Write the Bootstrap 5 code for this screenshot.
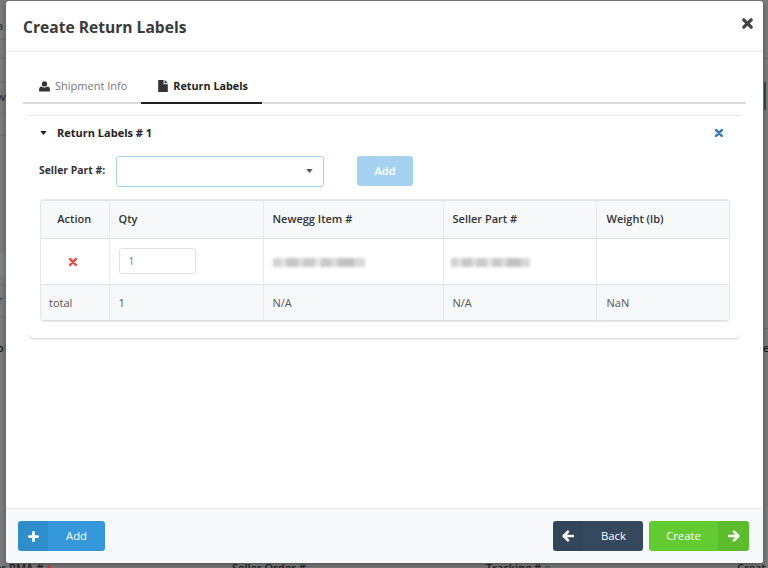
<!DOCTYPE html>
<html lang="en">
<head>
  <meta charset="UTF-8" />
  <meta name="viewport" content="width=device-width, initial-scale=1.0" />
  <title>Create Return Labels</title>
  <link href="https://cdn.jsdelivr.net/npm/bootstrap@5.3.0/dist/css/bootstrap.min.css" rel="stylesheet">
  <style>
    html, body {
      height: 568px;
      overflow: hidden;
    }
    body {
      background-color: #7c7c7c;
      font-family: "Open Sans", "Liberation Sans", sans-serif;
      font-size: 11px;
      color: #555;
      padding: 1px 5px 5px 6px;
      position: relative;
    }
    /* page behind the modal */
    .bg-line { position: absolute; height: 1px; background: #6e6e6e; }
    .bg-text { position: absolute; color: #222; font-size: 11px; font-weight: 600; line-height: 12px; white-space: nowrap; }
    .bg-block { position: absolute; }

    .return-modal {
      position: relative;
      height: 562px;
      background: #fff;
      border: 0;
      border-radius: 3px;
      box-shadow: 0 2px 6px rgba(0,0,0,.35);
    }
    .return-modal .modal-header {
      height: 51px;
      padding: 4px 9px 0 17px;
      border-bottom: 1px solid #e6e6e6;
    }
    .return-modal .modal-title {
      font-size: 15.6px;
      font-weight: 700;
      color: #3a3a3a;
    }
    .close-x { color: #444; display: flex; margin-top: -9px; }
    .return-modal .modal-body { padding: 16px 17px 0; }
    .return-modal .modal-footer {
      height: 55px;
      padding: 0 14px 0 12px;
      background: #f7f8fa;
      border-top: 1px solid #e6e6e6;
      border-radius: 0 0 3px 3px;
    }

    .tabs-line { border-bottom: 2px solid #ddd; height: 36px; }
    .tabs-line .nav-link {
      height: 36px;
      margin-bottom: -2px;
      border: 0;
      border-bottom: 2px solid transparent;
      padding: 2px 14px 0 16px;
      display: flex;
      align-items: center;
      gap: 5px;
      color: #777;
      font-size: 11px;
      border-radius: 0;
    }
    .tabs-line .nav-link svg { color: #333; }
    .tabs-line .nav-link.active {
      color: #222;
      font-weight: 700;
      font-size: 10.8px;
      gap: 4px;
      border-bottom-color: #222;
    }

    .label-panel {
      margin: 11px 5px 0;
      height: 224px;
      border-top: 1px solid #e6e6e6;
      border-bottom: 1px solid #ddd;
      border-radius: 0 0 6px 6px;
      box-shadow: 0 1px 1px rgba(0,0,0,.06);
      padding: 0 12px 0 11px;
    }
    .panel-head { height: 34px; color: #222; font-weight: 700; font-size: 11px; padding-right: 5px; }
    .panel-head .caret { margin: 0 10px 0 1px; }
    .remove-x { color: #337ab7; display: flex; }

    .part-row { height: 32px; margin-top: 5px; }
    .part-row label { width: 77px; color: #333; font-weight: 700; font-size: 10.4px; }
    .part-select {
      width: 208px;
      height: 31px;
      border: 1px solid #a5d2ea;
      border-radius: 3px;
      background: #fff;
      padding-right: 10px;
      color: #555;
    }
    .btn-add-part {
      width: 56px;
      height: 30px;
      margin-left: 33px;
      padding: 0;
      border: 0;
      border-radius: 3px;
      color: #fff;
      font-size: 11px;
      font-weight: 600;
    }
    .btn-add-part:disabled { background: #a6d2f1; color: #fff; opacity: 1; }

    .table-wrap {
      margin: 12px 0 0 1px;
      border: 1px solid #e4e6ea;
      border-radius: 4px;
      overflow: hidden;
      width: 690px;
    }
    .items-table {
      table-layout: fixed;
      margin: 0;
      color: #555;
      font-size: 11px;
    }
    .items-table th, .items-table td {
      border-color: #e6e8ec;
      padding: 0 9px;
      vertical-align: middle;
      background: transparent;
      box-shadow: none;
      color: inherit;
    }
    .items-table tr > :first-child { border-left: 0; padding-left: 8px; }
    .items-table tr > :last-child { border-right: 0; padding-left: 10px; }
    .items-table thead tr { height: 38px; background: #f7f8fa; }
    .items-table thead th { color: #333; font-weight: 600; border-top: 0; }
    .items-table tbody tr.item-row { height: 46px; }
    .items-table tbody tr.item-row td { padding-bottom: 1px; }
    .items-table tbody tr.total-row { height: 36px; background: #f7f8fa; }
    .items-table tbody tr.total-row td { border-bottom: 0; padding-top: 1px; }
    .col-action { width: 68px; }
    .col-qty { width: 154px; }
    .col-item { width: 180px; }
    .col-part { width: 153px; }
    .qty-input {
      width: 77px;
      height: 26px;
      padding: 0 9px;
      font-size: 10px;
      color: #777;
      border: 1px solid #e2e2e2;
      border-radius: 3px;
      box-shadow: none;
    }
    .del-x { color: #e74c3c; display: inline-flex; margin: 7px 2px 0 0; }

    .blurred {
      height: 9px;
      margin-top: 2px;
      filter: blur(1.6px);
      background: linear-gradient(90deg, #d2d2d2 0 9%, #e4e4e4 9% 14%, #c6c6c6 14% 27%, #dedede 27% 33%, #cacaca 33% 46%, #e6e6e6 46% 52%, #c8c8c8 52% 63%, #dcdcdc 63% 71%, #c2c2c2 71% 88%, #d8d8d8 88% 100%);
    }
    .blurred-item { width: 92px; }
    .blurred-part { width: 79px; margin-left: -2px; }

    .btn-split {
      height: 30px;
      padding: 0;
      border: 0;
      border-radius: 3px;
      color: #fff;
      font-size: 11.3px;
      font-weight: 500;
      display: flex;
      align-items: stretch;
      overflow: hidden;
    }
    .btn-split:hover { color: #fff; }
    .btn-split .ico { width: 30px; display: flex; align-items: center; justify-content: center; background: rgba(0,0,0,.07); }
    .btn-split .txt { flex: 1; display: flex; align-items: center; justify-content: center; }
    .btn-split.add { width: 87px; background: #3498db; }
    .btn-split.back { width: 90px; background: #34495e; margin-right: 6px; }
    .btn-split.back .ico { background: rgba(0,0,0,.04); }
    .btn-split.back .txt { padding-left: 1px; }
    .btn-split.create { width: 100px; background: #62cb31; }
    .btn-split.create .ico { width: 31px; }
  </style>
</head>
<body>
  <svg width="0" height="0" class="position-absolute">
    <symbol id="i-times" viewBox="0 0 12 12"><path d="M2.6 2.6 9.4 9.4M9.4 2.6 2.6 9.4" fill="none" stroke="currentColor" stroke-width="3.1" stroke-linecap="round"/></symbol>
    <symbol id="i-user" viewBox="0 0 12 12"><circle cx="6" cy="3.2" r="2.9" fill="currentColor"/><path d="M.8 11.4c-.5 0-.8-.4-.8-.9C0 8.300.6 6 2.600 6c.9.8 2 1.200 3.400 1.200S8.500 6.800 9.400 6c2 0 2.600 2.300 2.600 4.500 0 .5-.3.9-.8.9z" fill="currentColor"/></symbol>
    <symbol id="i-file" viewBox="0 0 12 12"><path d="M1.200 0H6.600V4.200H10.800V12H1.200zM7.600 0 10.800 3.200H7.600z" fill="currentColor"/></symbol>
    <symbol id="i-plus" viewBox="0 0 12 12"><path d="M6 1.500V10.500M1.500 6H10.500" fill="none" stroke="currentColor" stroke-width="3" stroke-linecap="round"/></symbol>
    <symbol id="i-left" viewBox="0 0 12 12"><path d="M6 1.600 1.700 6 6 10.400M2 6H11" fill="none" stroke="currentColor" stroke-width="2.700" stroke-linecap="round" stroke-linejoin="round"/></symbol>
    <symbol id="i-right" viewBox="0 0 12 12"><path d="M6 1.600 10.300 6 6 10.400M10 6H1" fill="none" stroke="currentColor" stroke-width="2.700" stroke-linecap="round" stroke-linejoin="round"/></symbol>
    <symbol id="i-caret" viewBox="0 0 8 5"><path d="M0 0H8L4 5z" fill="currentColor"/></symbol>
  </svg>

  <!-- page behind the modal -->
  <div class="bg-line" style="left:0;width:6px;top:39px"></div>
  <div class="bg-line" style="left:0;width:6px;top:58px"></div>
  <div class="bg-line" style="left:0;width:6px;top:82px"></div>
  <div class="bg-line" style="left:0;width:6px;top:113px"></div>
  <div class="bg-line" style="left:0;width:6px;top:135px"></div>
  <div class="bg-line" style="left:0;width:6px;top:284px"></div>
  <div class="bg-line" style="left:0;width:6px;top:316px"></div>
  <div class="bg-line" style="left:763px;width:5px;top:58px"></div>
  <div class="bg-line" style="left:763px;width:5px;top:328px"></div>
  <div class="bg-block" style="left:0;width:6px;top:253px;height:24px;background:#808488"></div>
  <div class="bg-block" style="left:764px;width:2px;top:82px;height:28px;background:#3f4650"></div>
  <div class="bg-text" style="left:-3px;top:20px;font-weight:400">a</div>
  <div class="bg-text" style="left:-3px;top:91px;font-weight:400">w</div>
  <div class="bg-text" style="left:-2px;top:294px;font-weight:400">r</div>
  <div class="bg-text" style="left:-3px;top:342px">o</div>
  <div class="bg-text" style="left:763px;top:342px">e</div>
  <div class="bg-text" style="left:-5px;top:562px">er RMA # <span class="text-danger">*</span></div>
  <div class="bg-text" style="left:232px;top:562px">Seller Order #</div>
  <div class="bg-text" style="left:486px;top:562px">Tracking # ○</div>
  <div class="bg-text" style="left:737px;top:562px">Creat</div>

  <div class="modal-content return-modal">
    <div class="modal-header">
      <h5 class="modal-title">Create Return Labels</h5>
      <a class="close-x ms-auto" href="#" aria-label="Close"><svg width="13" height="13"><use href="#i-times"/></svg></a>
    </div>

    <div class="modal-body">
      <ul class="nav tabs-line">
        <li class="nav-item">
          <a class="nav-link" href="#"><svg width="11" height="11"><use href="#i-user"/></svg>Shipment Info</a>
        </li>
        <li class="nav-item">
          <a class="nav-link active" href="#"><svg width="12" height="12"><use href="#i-file"/></svg>Return Labels</a>
        </li>
      </ul>

      <div class="label-panel">
        <div class="panel-head d-flex align-items-center">
          <svg class="caret" width="7" height="4"><use href="#i-caret"/></svg>
          <span>Return Labels # 1</span>
          <a class="remove-x ms-auto" href="#" aria-label="Remove"><svg width="10" height="10"><use href="#i-times"/></svg></a>
        </div>

        <div class="part-row d-flex align-items-center">
          <label>Seller Part #:</label>
          <div class="part-select d-flex align-items-center justify-content-end">
            <svg width="7" height="4"><use href="#i-caret"/></svg>
          </div>
          <button class="btn btn-add-part" disabled>Add</button>
        </div>

        <div class="table-wrap">
          <table class="table table-bordered items-table">
            <colgroup>
              <col class="col-action"><col class="col-qty"><col class="col-item"><col class="col-part"><col>
            </colgroup>
            <thead>
              <tr>
                <th class="text-center">Action</th>
                <th>Qty</th>
                <th>Newegg Item #</th>
                <th>Seller Part #</th>
                <th>Weight (lb)</th>
              </tr>
            </thead>
            <tbody>
              <tr class="item-row">
                <td class="text-center"><a class="del-x" href="#" aria-label="Delete"><svg width="10" height="10"><use href="#i-times"/></svg></a></td>
                <td><input class="form-control qty-input" type="text" value="1"></td>
                <td><div class="blurred blurred-item"></div></td>
                <td><div class="blurred blurred-part"></div></td>
                <td></td>
              </tr>
              <tr class="total-row">
                <td>total</td>
                <td>1</td>
                <td>N/A</td>
                <td>N/A</td>
                <td>NaN</td>
              </tr>
            </tbody>
          </table>
        </div>
      </div>
    </div>

    <div class="modal-footer d-flex justify-content-between">
      <button class="btn btn-split add m-0">
        <span class="ico"><svg width="11" height="11"><use href="#i-plus"/></svg></span><span class="txt">Add</span>
      </button>
      <div class="d-flex m-0">
        <button class="btn btn-split back">
          <span class="ico"><svg width="12" height="12"><use href="#i-left"/></svg></span><span class="txt">Back</span>
        </button>
        <button class="btn btn-split create">
          <span class="txt">Create</span><span class="ico"><svg width="12" height="12"><use href="#i-right"/></svg></span>
        </button>
      </div>
    </div>
  </div>

  <script src="https://cdn.jsdelivr.net/npm/bootstrap@5.3.0/dist/js/bootstrap.bundle.min.js"></script>
</body>
</html>
